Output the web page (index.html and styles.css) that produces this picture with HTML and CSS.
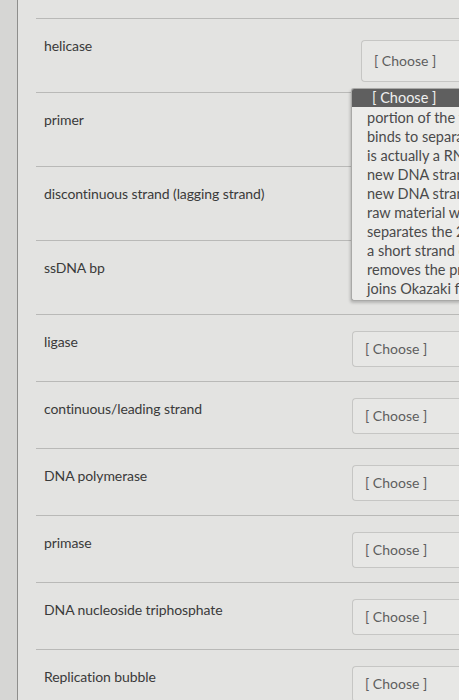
FILE: index.html
```html
<!DOCTYPE html>
<html lang="en">
<head>
<meta charset="utf-8">
<title>Matching</title>
<link rel="stylesheet" href="styles.css">
</head>
<body>
<div class="page">
  <div class="gutter"></div>
  <div class="content">
    <div class="quiz">
      <div class="row row-tall"><div class="label">helicase</div><div class="select select-first">[ Choose ]</div></div>
      <div class="row row-tall"><div class="label">primer</div><div class="select select-covered">[ Choose ]</div></div>
      <div class="row row-tall"><div class="label">discontinuous strand (lagging strand)</div><div class="select select-covered">[ Choose ]</div></div>
      <div class="row row-tall"><div class="label">ssDNA bp</div><div class="select select-covered">[ Choose ]</div></div>
      <div class="row"><div class="label">ligase</div><div class="select">[ Choose ]</div></div>
      <div class="row"><div class="label">continuous/leading strand</div><div class="select">[ Choose ]</div></div>
      <div class="row"><div class="label">DNA polymerase</div><div class="select">[ Choose ]</div></div>
      <div class="row"><div class="label">primase</div><div class="select">[ Choose ]</div></div>
      <div class="row"><div class="label">DNA nucleoside triphosphate</div><div class="select">[ Choose ]</div></div>
      <div class="row"><div class="label">Replication bubble</div><div class="select">[ Choose ]</div></div>

      <ul class="dropdown">
        <li class="opt opt-selected">[ Choose ]</li>
        <li class="opt">portion of the template strand</li>
        <li class="opt">binds to separated strands</li>
        <li class="opt">is actually a RNA strand</li>
        <li class="opt">new DNA strand made continuously</li>
        <li class="opt">new DNA strand made in pieces</li>
        <li class="opt">raw material with three phosphates</li>
        <li class="opt">separates the 2 strands</li>
        <li class="opt">a short strand of RNA</li>
        <li class="opt">removes the primer</li>
        <li class="opt">joins Okazaki fragments</li>
      </ul>
    </div>
  </div>
</div>
</body>
</html>
```

FILE: styles.css
```css
html, body {
  margin: 0;
  padding: 0;
  height: 700px;
  overflow: hidden;
}

body {
  background: #dcdcda;
  font-family: Lato, "Open Sans", "Liberation Sans", sans-serif;
  color: #3a3a3a;
}

.page {
  display: flex;
  height: 700px;
}

.gutter {
  width: 17px;
  flex: none;
  background: #d6d6d4;
  border-right: 1px solid #8e8e8c;
}

.content {
  flex: 1;
  min-width: 0;
  background: #e3e3e1;
  padding-left: 18px;
}

.quiz {
  position: relative;
  padding-top: 18px;
}

.row {
  height: 67px;
  border-top: 1px solid #b9b9b7;
  display: flex;
  justify-content: space-between;
  align-items: flex-start;
  box-sizing: border-box;
}

.row-tall {
  height: 74px;
}

.label {
  padding-left: 8px;
  padding-top: 18px;
  font-size: 14px;
  line-height: 18px;
  letter-spacing: -0.1px;
}

.select {
  margin-top: 16px;
  width: 107px;
  height: 36px;
  box-sizing: border-box;
  border: 1px solid #c6c6c4;
  border-right: none;
  border-radius: 4px 0 0 4px;
  background: #e7e7e5;
  color: #5e5e5e;
  font-size: 14px;
  line-height: 34px;
  padding-left: 12px;
  white-space: nowrap;
}

.row-tall .select {
  margin-top: 20px;
  height: 38px;
  line-height: 36px;
}

.row-tall .select-first {
  margin-top: 21px;
  height: 42px;
  line-height: 40px;
  width: 98px;
}

.select-covered {
  visibility: hidden;
}

.dropdown {
  position: absolute;
  left: 315px;
  top: 88px;
  width: 110px;
  margin: 0;
  padding: 0 0 2px 0;
  list-style: none;
  background: #ececea;
  border: 1px solid #a9a9a7;
  border-right: none;
  border-radius: 3px 0 0 3px;
  box-shadow: -1px 2px 3px rgba(0, 0, 0, 0.2);
  overflow: hidden;
}

.opt {
  font-size: 14.5px;
  line-height: 19px;
  padding-left: 15px;
  color: #4a4a4a;
  white-space: nowrap;
}

.opt-selected {
  background: #5f5f5f;
  color: #f0f0f0;
  padding-left: 20px;
  line-height: 18px;
  margin-bottom: 1px;
}
```
